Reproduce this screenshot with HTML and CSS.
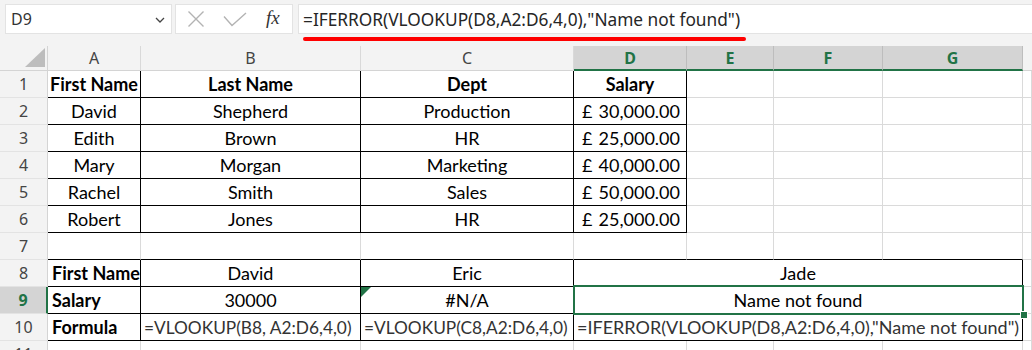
FILE: index.html
```html
<!DOCTYPE html>
<html>
<head>
<meta charset="utf-8">
<link rel="stylesheet" href="styles.css">
</head>
<body>
<div class="toolbar">
  <div class="namebox">
    <span>D9</span>
    <svg class="chev" width="10" height="6" viewBox="0 0 10 6"><path d="M1 1 L5 5 L9 1" fill="none" stroke="#444" stroke-width="1.3"/></svg>
  </div>
  <div class="btns">
    <svg class="ic" width="18" height="18" viewBox="0 0 18 18"><path d="M1.5 1.5 L16.5 16.5 M16.5 1.5 L1.5 16.5" stroke="#b3b3b3" stroke-width="1.4" fill="none"/></svg>
    <svg class="ic chk" width="24" height="16" viewBox="0 0 24 16"><path d="M1 4.5 L9 13.5 L23 1" stroke="#b3b3b3" stroke-width="1.4" fill="none"/></svg>
    <span class="fx">fx</span>
  </div>
  <div class="formula">=IFERROR(VLOOKUP(D8,A2:D6,4,0),"Name not found")</div>
  <div class="redline"></div>
</div>
<div class="sheet">
  <div class="corner"><svg width="20" height="19" viewBox="0 0 20 19"><path d="M20 0 L20 19 L0 19 Z" fill="#bdbdbd"/></svg></div>
  <div class="ch">A</div><div class="ch">B</div><div class="ch">C</div>
  <div class="ch on">D</div><div class="ch on">E</div><div class="ch on">F</div><div class="ch on">G</div><div class="ch last"></div>

  <div class="rh">1</div>
  <div class="c blk ctr bold">First Name</div><div class="c blk ctr bold">Last Name</div><div class="c blk ctr bold">Dept</div><div class="c blk ctr bold">Salary</div>
  <div class="c"></div><div class="c"></div><div class="c"></div><div class="c"></div>

  <div class="rh">2</div>
  <div class="c blk ctr">David</div><div class="c blk ctr">Shepherd</div><div class="c blk ctr">Production</div><div class="c blk acct"><span>£</span><span>30,000.00</span></div>
  <div class="c"></div><div class="c"></div><div class="c"></div><div class="c"></div>

  <div class="rh">3</div>
  <div class="c blk ctr">Edith</div><div class="c blk ctr">Brown</div><div class="c blk ctr">HR</div><div class="c blk acct"><span>£</span><span>25,000.00</span></div>
  <div class="c"></div><div class="c"></div><div class="c"></div><div class="c"></div>

  <div class="rh">4</div>
  <div class="c blk ctr">Mary</div><div class="c blk ctr">Morgan</div><div class="c blk ctr">Marketing</div><div class="c blk acct"><span>£</span><span>40,000.00</span></div>
  <div class="c"></div><div class="c"></div><div class="c"></div><div class="c"></div>

  <div class="rh">5</div>
  <div class="c blk ctr">Rachel</div><div class="c blk ctr">Smith</div><div class="c blk ctr">Sales</div><div class="c blk acct"><span>£</span><span>50,000.00</span></div>
  <div class="c"></div><div class="c"></div><div class="c"></div><div class="c"></div>

  <div class="rh">6</div>
  <div class="c blk ctr">Robert</div><div class="c blk ctr">Jones</div><div class="c blk ctr">HR</div><div class="c blk acct"><span>£</span><span>25,000.00</span></div>
  <div class="c"></div><div class="c"></div><div class="c"></div><div class="c"></div>

  <div class="rh">7</div>
  <div class="c bb"></div><div class="c bb"></div><div class="c bb"></div><div class="c bb"></div>
  <div class="c bb"></div><div class="c bb"></div><div class="c bb"></div><div class="c"></div>

  <div class="rh">8</div>
  <div class="c blk bold">First Name</div><div class="c blk ctr">David</div><div class="c blk ctr">Eric</div>
  <div class="c blk ctr span4">Jade</div><div class="c"></div>

  <div class="rh on">9</div>
  <div class="c blk bold">Salary</div><div class="c blk ctr">30000</div><div class="c blk ctr err">#N/A</div>
  <div class="c blk ctr span4 sel">Name not found<span class="handle"></span></div><div class="c"></div>

  <div class="rh">10</div>
  <div class="c blk bold">Formula</div><div class="c blk fml sm">=VLOOKUP(B8, A2:D6,4,0)</div><div class="c blk fml sm">=VLOOKUP(C8,A2:D6,4,0)</div>
  <div class="c blk fml span4">=IFERROR(VLOOKUP(D8,A2:D6,4,0),"Name not found")</div><div class="c"></div>

  <div class="rh">11</div>
  <div class="c"></div><div class="c"></div><div class="c"></div><div class="c"></div>
  <div class="c"></div><div class="c"></div><div class="c"></div><div class="c"></div>
</div>
</body>
</html>
```
FILE: styles.css
```css
* { box-sizing: border-box; margin: 0; padding: 0; }
body {
  margin: 0;
  width: 1032px;
  height: 350px;
  overflow: hidden;
  background: #fff;
  font-family: Lato, "Liberation Sans", sans-serif;
}
.toolbar {
  position: relative;
  height: 46px;
  background: #f3f3f3;
  display: flex;
  align-items: flex-start;
  padding: 4px 0 0 5px;
}
.namebox {
  width: 167px;
  height: 30px;
  background: #fff;
  border: 1px solid #e3e3e3;
  display: flex;
  align-items: center;
  justify-content: space-between;
  padding: 0 6px 0 5px;
  font-family: "Noto Sans", sans-serif;
  font-size: 16px;
  color: #333;
}
.chev { margin-top: 2px; }
.btns {
  width: 118px;
  height: 30px;
  margin-left: 3px;
  background: #fff;
  border: 1px solid #e3e3e3;
  display: flex;
  align-items: center;
  padding-left: 11px;
}
.ic { display: block; }
.chk { margin-left: 18px; margin-top: 2px; }
.fx {
  margin-left: 19px;
  font-family: "Liberation Serif", serif;
  font-style: italic;
  font-size: 19px;
  color: #333;
  margin-top: -2px;
}
.formula {
  flex: 1;
  height: 30px;
  margin-left: 5px;
  background: #fff;
  border: 1px solid #e3e3e3;
  border-right: none;
  display: flex;
  align-items: center;
  padding-left: 4px;
  font-family: "Noto Sans", sans-serif;
  font-size: 17.3px;
  color: #262626;
  white-space: nowrap;
}
.redline {
  position: absolute;
  left: 303px;
  top: 37px;
  width: 443px;
  height: 4px;
  border-radius: 2px;
  background: #ff0000;
}
.sheet {
  display: grid;
  grid-template-columns: 48px 93px 220px 213px 113px 87px 109px 140px 9px;
  grid-template-rows: 25px repeat(11, 27px);
}
.corner {
  background: #f3f3f3;
  border-right: 1px solid #d4d4d4;
  border-bottom: 1px solid #d4d4d4;
  display: flex;
  justify-content: flex-end;
  align-items: flex-end;
  padding: 0 2px 3px 0;
}
.ch {
  background: #f3f3f3;
  border-right: 1px solid #d9d9d9;
  border-bottom: 1px solid #d4d4d4;
  display: flex;
  justify-content: center;
  align-items: center;
  font-family: "Noto Sans", sans-serif;
  font-size: 16px;
  color: #444;
}
.ch.on {
  background: #d4d4d4;
  color: #217346;
  font-weight: 700;
  border-right-color: #bdbdbd;
  border-bottom: 2px solid #217346;
}
.ch.last { border-right: none; }
.rh {
  background: #f3f3f3;
  border-right: 1px solid #d4d4d4;
  border-bottom: 1px solid #e3e3e3;
  display: flex;
  justify-content: center;
  align-items: center;
  font-family: "Noto Sans", sans-serif;
  font-size: 16px;
  color: #444;
}
.rh.on {
  background: #d4d4d4;
  color: #217346;
  font-weight: 700;
  border-right: 2px solid #217346;
}
.c {
  border-right: 1px solid #dadada;
  border-bottom: 1px solid #dadada;
  display: flex;
  align-items: center;
  padding: 0 4px;
  font-size: 18px;
  color: #000;
  white-space: nowrap;
  overflow: hidden;
}
.ctr { justify-content: center; }
.bold { font-weight: 700; }
.blk { border-right-color: #000; border-bottom-color: #000; }
.bb { border-bottom-color: #000; }
.span4 { grid-column: span 4; }
.acct { justify-content: space-between; padding: 0 6px 0 8px; }
.fml { color: #333; padding-left: 3px; }
.fml.sm { font-size: 17.3px; }
.err { position: relative; }
.err::before {
  content: "";
  position: absolute;
  left: 0;
  top: 0;
  border-top: 10px solid #217346;
  border-right: 10px solid transparent;
}
.sel { position: relative; overflow: visible; z-index: 1; }
.sel::after {
  content: "";
  position: absolute;
  left: -1px;
  top: -2px;
  right: -2px;
  bottom: -2px;
  border: 2px solid #217346;
}
.handle {
  position: absolute;
  right: -6px;
  bottom: -6px;
  width: 8px;
  height: 8px;
  background: #217346;
  border: 1px solid #fff;
  z-index: 2;
}
```
